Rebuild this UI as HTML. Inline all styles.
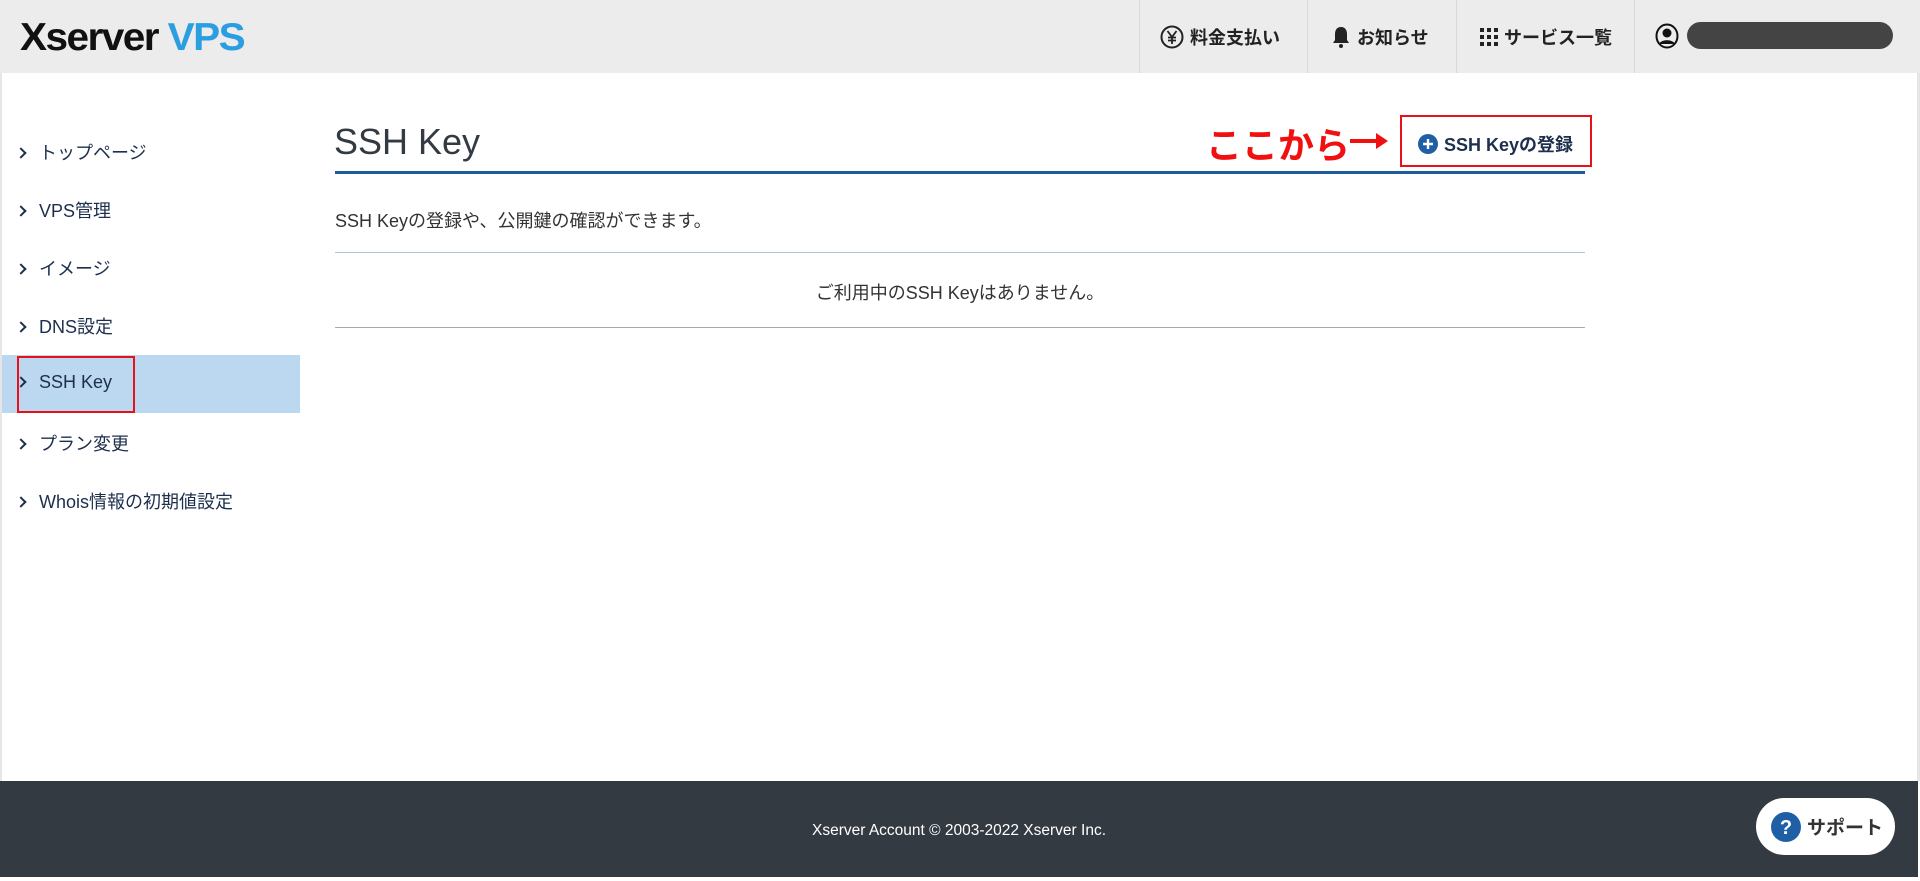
<!DOCTYPE html>
<html><head><meta charset="utf-8"><style>
*{margin:0;padding:0;box-sizing:border-box}
body{width:1920px;height:880px;overflow:hidden;background:#fff;font-family:"Liberation Sans","Noto Sans CJK JP",sans-serif;position:relative}
.hdr{position:absolute;left:0;top:0;width:1920px;height:73px;background:#ececec}
.logo{position:absolute;left:20px;top:16px;font-size:39px;font-weight:bold;letter-spacing:-1.5px;color:#111;transform-origin:0 0;transform:scaleX(1.04);white-space:nowrap}
.logo span{color:#2a9ee0}
.sep{position:absolute;top:0;width:1px;height:73px;background:#d8d8d8}
.hi{position:absolute;top:24px;font-size:18px;font-weight:bold;color:#222;display:flex;align-items:center;gap:6px;white-space:nowrap}
.frame{position:absolute;left:0;top:73px;width:1920px;height:708px;border-left:2px solid #e6e6e6;border-right:3px solid #e6e6e6}
.nav{position:absolute;left:17px;font-size:18px;color:#1d2f4d;white-space:nowrap}
.nav b{display:inline-block;width:8px;height:8px;border-right:2px solid #1d2f4d;border-top:2px solid #1d2f4d;transform:rotate(45deg);margin-right:14px;position:relative;top:-2px}
.foot{position:absolute;left:0;top:781px;width:1918px;height:96px;background:#343a42;color:#fff;font-size:15.5px;text-align:center;line-height:100px}
</style></head><body>
<div class="hdr">
<div class="logo">Xserver <span>VPS</span></div>
<div class="sep" style="left:1139px"></div><div class="sep" style="left:1307px"></div><div class="sep" style="left:1456px"></div><div class="sep" style="left:1634px"></div>
<div class="hi" style="left:1160px"><svg width="24" height="24" viewBox="0 0 24 24"><circle cx="12" cy="12" r="10.5" fill="none" stroke="#222" stroke-width="2"/><path d="M7.5 6l4.5 6 4.5-6M12 12v7M8 12.5h8M8 15.5h8" fill="none" stroke="#222" stroke-width="1.8"/></svg>料金支払い</div>
<div class="hi" style="left:1331px"><svg width="20" height="24" viewBox="0 0 20 24"><path d="M10 2c-4 0-6 3-6 7v6l-2 3h16l-2-3V9c0-4-2-7-6-7z" fill="#222"/><circle cx="10" cy="21" r="2" fill="#222"/></svg>お知らせ</div>
<div class="hi" style="left:1480px"><svg width="18" height="18" viewBox="0 0 18 18" fill="#222"><rect x="0" y="0" width="4" height="4"/><rect x="7" y="0" width="4" height="4"/><rect x="14" y="0" width="4" height="4"/><rect x="0" y="7" width="4" height="4"/><rect x="7" y="7" width="4" height="4"/><rect x="14" y="7" width="4" height="4"/><rect x="0" y="14" width="4" height="4"/><rect x="7" y="14" width="4" height="4"/><rect x="14" y="14" width="4" height="4"/></svg>サービス一覧</div>
<svg style="position:absolute;left:1655px;top:23px" width="24" height="26" viewBox="0 0 24 26"><ellipse cx="12" cy="13" rx="10.5" ry="11.5" fill="none" stroke="#111" stroke-width="2"/><circle cx="12" cy="10" r="4.5" fill="#111"/><path d="M4 21c2-5 14-5 16 0" fill="#111"/></svg>
<div style="position:absolute;left:1687px;top:22px;width:206px;height:27px;border-radius:14px;background:#444"></div>
</div>
<div class="frame"></div>
<div style="position:absolute;left:2px;top:355px;width:298px;height:58px;background:#bcd7f0"></div>
<div style="position:absolute;left:17px;top:356px;width:118px;height:57px;border:2px solid #e8101a"></div>
<div class="nav" style="top:139px"><b></b>トップページ</div>
<div class="nav" style="top:197px"><b></b>VPS管理</div>
<div class="nav" style="top:255px"><b></b>イメージ</div>
<div class="nav" style="top:313px"><b></b>DNS設定</div>
<div class="nav" style="top:372px"><b></b>SSH Key</div>
<div class="nav" style="top:430px"><b></b>プラン変更</div>
<div class="nav" style="top:488px"><b></b>Whois情報の初期値設定</div>
<div style="position:absolute;left:334px;top:121px;font-size:36px;color:#333a42">SSH Key</div>
<div style="position:absolute;left:335px;top:171px;width:1250px;height:3px;background:#1c5c9c"></div>
<div style="position:absolute;left:1206px;top:117px;font-size:36px;font-weight:bold;color:#f01010;white-space:nowrap">ここから</div>
<svg style="position:absolute;left:1350px;top:131px" width="40" height="20" viewBox="0 0 40 20"><path d="M0 10h32" stroke="#f01010" stroke-width="4"/><path d="M26 2l12 8-12 8z" fill="#f01010"/></svg>
<div style="position:absolute;left:1400px;top:115px;width:192px;height:52px;border:2px solid #e8101a"></div>
<div style="position:absolute;left:1418px;top:131px;display:flex;align-items:center;gap:6px;font-size:18px;font-weight:bold;color:#1d2f4d;white-space:nowrap"><svg width="20" height="20" viewBox="0 0 20 20"><circle cx="10" cy="10" r="10" fill="#1f5fa6"/><path d="M10 5v10M5 10h10" stroke="#fff" stroke-width="2.4"/></svg>SSH Keyの登録</div>
<div style="position:absolute;left:335px;top:207px;font-size:18px;color:#333">SSH Keyの登録や、公開鍵の確認ができます。</div>
<div style="position:absolute;left:335px;top:252px;width:1250px;height:1px;background:#a9c6e0"></div>
<div style="position:absolute;left:335px;top:279px;width:1250px;text-align:center;font-size:18px;color:#333">ご利用中のSSH Keyはありません。</div>
<div style="position:absolute;left:335px;top:327px;width:1250px;height:1px;background:#aaa"></div>
<div class="foot">Xserver Account © 2003-2022 Xserver Inc.</div>
<div style="position:absolute;left:1756px;top:798px;width:139px;height:57px;border-radius:29px;background:#fff;display:flex;align-items:center;padding-left:15px;gap:6px;font-size:19px;font-weight:bold;color:#333"><svg width="30" height="30" viewBox="0 0 30 30"><circle cx="15" cy="15" r="15" fill="#1f5fa6"/><text x="15" y="22" text-anchor="middle" font-family="Liberation Sans" font-weight="bold" font-size="20" fill="#fff">?</text></svg>サポート</div>
</body></html>
